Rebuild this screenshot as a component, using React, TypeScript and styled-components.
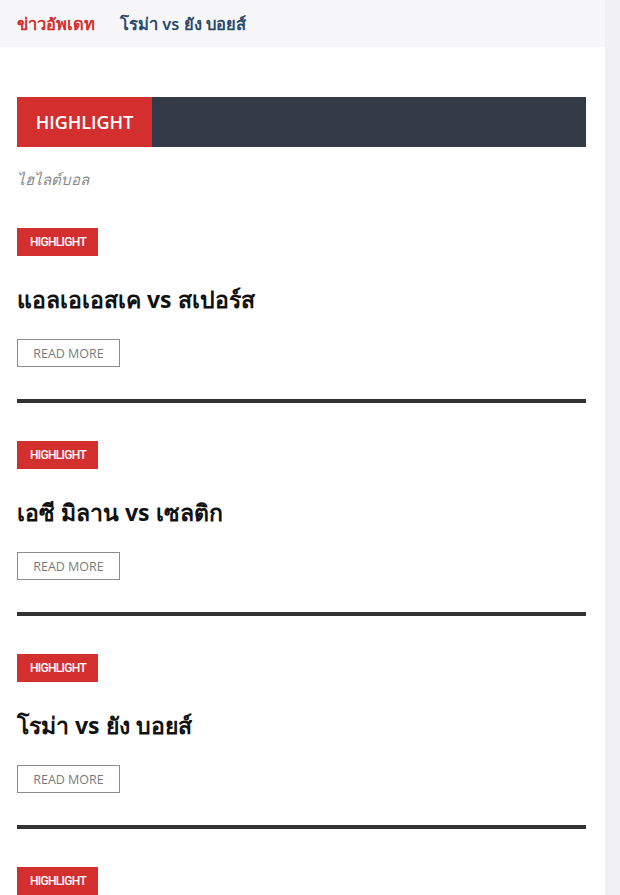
import styled, { createGlobalStyle } from "styled-components";

const GlobalStyle = createGlobalStyle`
  html, body {
    margin: 0;
    padding: 0;
    font-family: "Noto Sans", "Open Sans", sans-serif;
  }
  body {
    background: #f1f0f2;
  }
`;

// the reference was taken with a 15px scrollbar track on the right
const Page = styled.div`
  width: 605px;
  min-height: 2610px;
  background: #ffffff;
`;

const TopNav = styled.nav`
  height: 47px;
  display: flex;
  align-items: center;
  gap: 25px;
  padding: 0 17px;
  background-color: #f7f7f9;
`;

const NavLink = styled.a<{ $active?: boolean }>`
  font-size: 16.5px;
  font-weight: 600;
  text-decoration: none;
  color: ${(p) => (p.$active ? "#d32f2f" : "#2b4a6b")};
  cursor: pointer;
`;

const Main = styled.main`
  padding: 50px 19px 0 17px;
`;

const SectionHeader = styled.div`
  display: flex;
  height: 50px;
  background-color: #343a48;
`;

const SectionTitle = styled.h2`
  margin: 0;
  width: 135px;
  display: flex;
  align-items: center;
  justify-content: center;
  background-color: #d32f2f;
  color: #ffffff;
  font-family: "Open Sans", sans-serif;
  font-size: 18px;
  font-weight: 600;
`;

const Subtitle = styled.p`
  margin: 20px 0 0;
  font-size: 15px;
  font-style: italic;
  color: #8a8a8a;
  line-height: 24px;
`;

const Feed = styled.div`
  margin-top: 37px;
`;

const Item = styled.article`
  padding-bottom: 32px;
  border-bottom: 4px solid #333333;
  margin-bottom: 38px;
`;

const Badge = styled.span`
  display: inline-flex;
  align-items: center;
  height: 28px;
  padding: 0 12px 0 13px;
  background-color: #d32f2f;
  color: #ffffff;
  font-family: "Roboto", sans-serif;
  font-size: 12px;
  font-weight: 500;
  letter-spacing: -0.7px;
`;

const Title = styled.h3`
  margin: 26px 0 0;
  font-size: 23px;
  font-weight: 700;
  line-height: 34px;
  color: #111111;
`;

const ReadMore = styled.button`
  margin-top: 23px;
  display: block;
  height: 28px;
  width: 103px;
  padding: 0;
  border: 1px solid #8c8c8c;
  background: #ffffff;
  color: #7a7a7a;
  font-family: "Open Sans", sans-serif;
  font-size: 12.5px;
  cursor: pointer;
`;

const posts = [
  "แอลเอเอสเค vs สเปอร์ส",
  "เอซี มิลาน vs เซลติก",
  "โรม่า vs ยัง บอยส์",
  "ไฮไลต์ฟุตบอล",
];

const App = () => {
  return (
    <Page>
      <GlobalStyle />
      <TopNav>
        <NavLink $active>ข่าวอัพเดท</NavLink>
        <NavLink>โรม่า vs ยัง บอยส์</NavLink>
      </TopNav>

      <Main>
        <SectionHeader>
          <SectionTitle>HIGHLIGHT</SectionTitle>
        </SectionHeader>
        <Subtitle>ไฮไลต์บอล</Subtitle>

        <Feed>
          {posts.map((title) => (
            <Item key={title}>
              <Badge>HIGHLIGHT</Badge>
              <Title>{title}</Title>
              <ReadMore>READ MORE</ReadMore>
            </Item>
          ))}
        </Feed>
      </Main>
    </Page>
  );
};

export default App;
